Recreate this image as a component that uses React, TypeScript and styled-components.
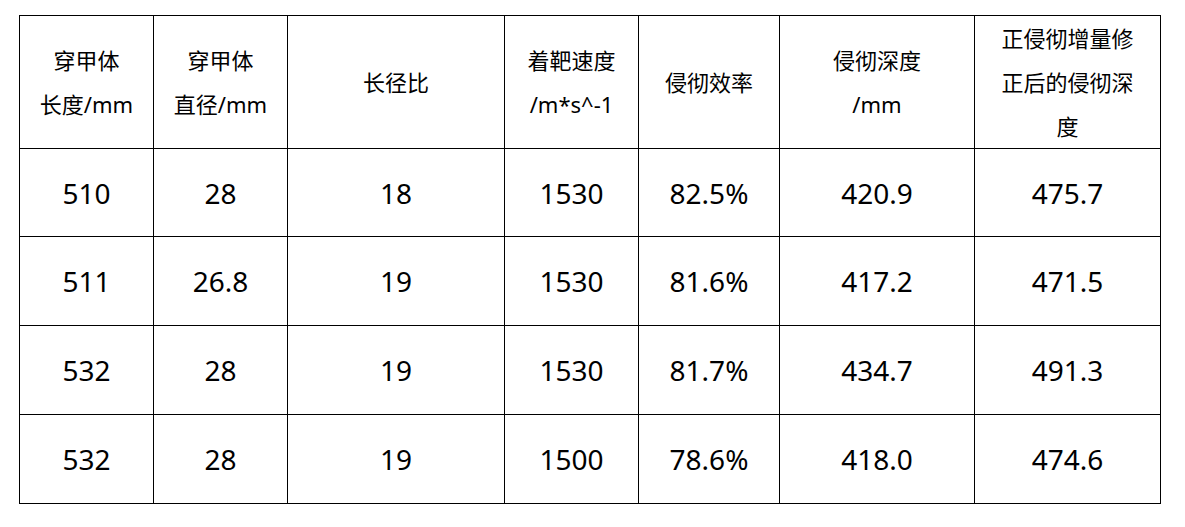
import React from 'react';
import styled, { createGlobalStyle } from 'styled-components';

const GlobalStyle = createGlobalStyle`
  html, body {
    margin: 0;
    padding: 0;
    background: #ffffff;
  }
  body {
    font-family: "Noto Sans", "Noto Sans CJK SC", sans-serif;
    color: #000000;
  }
`;

const Page = styled.div`
  padding: 15px 0 0 19px;
`;

const Table = styled.table`
  border-collapse: collapse;
  table-layout: fixed;
  width: 1141px;
`;

const HeadCell = styled.th`
  border: 1px solid #000;
  height: 132px;
  padding: 0 8px;
  font-weight: 400;
  font-size: 22px;
  line-height: 44px;
  text-align: center;
  vertical-align: middle;
`;

const Cell = styled.td<{ $h: number }>`
  border: 1px solid #000;
  height: ${(p) => p.$h}px;
  padding: 0;
  font-size: 28px;
  text-align: center;
  vertical-align: middle;
`;

const widths = [134, 134, 217, 134, 141, 195, 186];

const headers: string[][] = [
  ['穿甲体', '长度/mm'],
  ['穿甲体', '直径/mm'],
  ['长径比'],
  ['着靶速度', '/m*s^-1'],
  ['侵彻效率'],
  ['侵彻深度', '/mm'],
  ['正侵彻增量修', '正后的侵彻深', '度'],
];

const rows: string[][] = [
  ['510', '28', '18', '1530', '82.5%', '420.9', '475.7'],
  ['511', '26.8', '19', '1530', '81.6%', '417.2', '471.5'],
  ['532', '28', '19', '1530', '81.7%', '434.7', '491.3'],
  ['532', '28', '19', '1500', '78.6%', '418.0', '474.6'],
];

export default function App() {
  return (
    <>
      <GlobalStyle />
      <Page>
        <Table>
          <colgroup>
            {widths.map((w, i) => (
              <col key={i} style={{ width: w }} />
            ))}
          </colgroup>
          <thead>
            <tr>
              {headers.map((lines, i) => (
                <HeadCell key={i}>
                  {lines.map((l, j) => (
                    <React.Fragment key={j}>
                      {j > 0 && <br />}
                      {l}
                    </React.Fragment>
                  ))}
                </HeadCell>
              ))}
            </tr>
          </thead>
          <tbody>
            {rows.map((r, i) => (
              <tr key={i}>
                {r.map((v, j) => (
                  <Cell key={j} $h={i === 0 ? 87 : 88}>
                    {v}
                  </Cell>
                ))}
              </tr>
            ))}
          </tbody>
        </Table>
      </Page>
    </>
  );
}
